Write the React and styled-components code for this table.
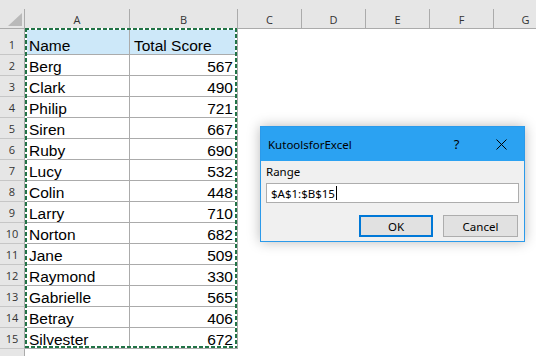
import React from "react";
import styled, { createGlobalStyle } from "styled-components";

const Global = createGlobalStyle`
  html, body { margin: 0; padding: 0; background: #fff; }
  body { width: 536px; height: 356px; overflow: hidden; font-family: "Liberation Sans", Arial, sans-serif; }
  #root { width: 536px; height: 356px; position: relative; overflow: hidden; }
`;

const Page = styled.div`
  width: 536px;
  height: 356px;
  position: relative;
  overflow: hidden;
  background: #fff;
`;

const TopStrip = styled.div`
  height: 9px;
  background: #e6e6e6;
  width: 600px;
`;

const Sheet = styled.div`
  display: grid;
  grid-template-columns: 25px 105px 108px 64px 64px 64px 64px 64px;
  grid-template-rows: 20px 26px repeat(15, 21px);
  width: 558px;
`;

const Corner = styled.div`
  grid-row: 1;
  grid-column: 1;
  background: #e6e6e6;
  border-right: 1px solid #ababab;
  border-bottom: 1px solid #ababab;
  box-sizing: border-box;
  display: flex;
  align-items: flex-end;
  justify-content: flex-end;
  padding: 0 2px 2px 0;
`;

const ColHead = styled.div`
  grid-row: 1;
  grid-column: ${(p) => p.$c};
  background: #e6e6e6;
  border-right: 1px solid #ababab;
  border-bottom: 1px solid #ababab;
  box-sizing: border-box;
  display: flex;
  align-items: center;
  justify-content: center;
  font-family: "Open Sans", "Noto Sans", sans-serif;
  font-size: 11px;
  color: #333;
  padding-top: 1px;
`;

const RowHead = styled.div`
  grid-row: ${(p) => p.$r};
  grid-column: 1;
  background: #e6e6e6;
  border-right: 1px solid #ababab;
  border-bottom: 1px solid #c6c6c6;
  box-sizing: border-box;
  display: flex;
  align-items: flex-end;
  justify-content: center;
  font-family: "Open Sans", "Noto Sans", sans-serif;
  font-size: 11px;
  line-height: 14px;
  color: #333;
  padding-bottom: 2px;
`;

const Cell = styled.div`
  grid-row: ${(p) => p.$r};
  grid-column: ${(p) => p.$c};
  box-sizing: border-box;
  border-right: 1px solid ${(p) => (p.$bordered ? "#ababab" : "transparent")};
  border-bottom: 1px solid ${(p) => (p.$bordered ? "#ababab" : "transparent")};
  background: ${(p) => (p.$head ? "#cde8f9" : "#fff")};
  display: flex;
  align-items: flex-end;
  justify-content: ${(p) => (p.$num ? "flex-end" : "flex-start")};
  padding: 0 ${(p) => (p.$num ? "4px" : "3px")} 0 ${(p) => (p.$num ? "3px" : "4px")};
  font-family: "Liberation Sans", Arial, sans-serif;
  font-size: 15.5px;
  line-height: 17px;
  color: #000;
  white-space: nowrap;
  overflow: hidden;
`;

const Ants = styled.div`
  grid-column: 2 / 4;
  grid-row: 2 / 17;
  margin: -1px 1px 1px 0;
  pointer-events: none;
  background:
    repeating-linear-gradient(90deg, #217346 0 4px, #fff 4px 6px) top / 100% 2px no-repeat,
    repeating-linear-gradient(90deg, #217346 0 4px, #fff 4px 6px) bottom / 100% 2px no-repeat,
    repeating-linear-gradient(180deg, #217346 0 4px, #fff 4px 6px) left / 2px 100% no-repeat,
    repeating-linear-gradient(180deg, #217346 0 4px, #fff 4px 6px) right / 2px 100% no-repeat;
`;

const Dialog = styled.div`
  position: absolute;
  left: 260px;
  top: 126px;
  width: 265px;
  height: 116px;
  box-sizing: border-box;
  border: 1px solid #2b9aea;
  background: #f0f0f0;
  box-shadow: 0 0 12px rgba(0, 0, 0, 0.28);
  display: flex;
  flex-direction: column;
  font-family: "Noto Sans", "Open Sans", sans-serif;
`;

const TitleBar = styled.div`
  height: 34px;
  background: #2ba2f2;
  display: flex;
  align-items: center;
  padding: 0 0 0 7px;
  font-size: 11.5px;
  color: #000;
`;

const Title = styled.div`
  flex: 1;
`;

const TitleBtn = styled.div`
  width: 45px;
  height: 34px;
  display: flex;
  align-items: center;
  justify-content: center;
  font-size: 13px;
  color: #000;
`;

const Body = styled.div`
  flex: 1;
  display: flex;
  flex-direction: column;
  padding: 3px 5px 0 5px;
`;

const Label = styled.div`
  font-size: 11.5px;
  line-height: 16px;
  color: #000;
`;

const Input = styled.div`
  margin-top: 3px;
  height: 20px;
  box-sizing: border-box;
  border: 1px solid #adadad;
  background: #fff;
  display: flex;
  align-items: center;
  padding-left: 4px;
  font-size: 11.5px;
  color: #000;
`;

const Caret = styled.span`
  display: inline-block;
  width: 1px;
  height: 14px;
  background: #000;
  margin-left: 1px;
`;

const Buttons = styled.div`
  margin-top: 12px;
  display: flex;
  justify-content: flex-end;
  gap: 10px;
  padding-right: 1px;
`;

const Button = styled.div`
  width: ${(p) => p.$w || 74}px;
  height: 22px;
  box-sizing: border-box;
  background: #e1e1e1;
  border: ${(p) => (p.$primary ? "2px solid #0078d7" : "1px solid #adadad")};
  display: flex;
  align-items: center;
  justify-content: center;
  font-size: 11.5px;
  color: #000;
`;

const rows = [
  ["Name", "Total Score"],
  ["Berg", "567"],
  ["Clark", "490"],
  ["Philip", "721"],
  ["Siren", "667"],
  ["Ruby", "690"],
  ["Lucy", "532"],
  ["Colin", "448"],
  ["Larry", "710"],
  ["Norton", "682"],
  ["Jane", "509"],
  ["Raymond", "330"],
  ["Gabrielle", "565"],
  ["Betray", "406"],
  ["Silvester", "672"],
];

const cols = ["A", "B", "C", "D", "E", "F", "G"];

export default function App() {
  return (
    <Page>
      <Global />
      <TopStrip />
      <Sheet>
        <Corner>
          <svg width="14" height="13" viewBox="0 0 14 13">
            <polygon points="14,0 14,13 0,13" fill="#b9b9b9" />
          </svg>
        </Corner>
        {cols.map((c, ci) => (
          <ColHead key={c} $c={ci + 2}>{c}</ColHead>
        ))}
        {rows.map((r, i) => (
          <React.Fragment key={i}>
            <RowHead $r={i + 2}>{i + 1}</RowHead>
            <Cell $r={i + 2} $c={2} $bordered $head={i === 0}>{r[0]}</Cell>
            <Cell $r={i + 2} $c={3} $bordered $head={i === 0} $num={i > 0}>{r[1]}</Cell>
          </React.Fragment>
        ))}
        <RowHead $r={17}>16</RowHead>
        <Ants />
      </Sheet>
      <Dialog>
        <TitleBar>
          <Title>KutoolsforExcel</Title>
          <TitleBtn>?</TitleBtn>
          <TitleBtn>
            <svg width="11" height="11" viewBox="0 0 11 11">
              <path d="M0.5 0.5 L10.5 10.5 M10.5 0.5 L0.5 10.5" stroke="#000" strokeWidth="1" />
            </svg>
          </TitleBtn>
        </TitleBar>
        <Body>
          <Label>Range</Label>
          <Input>
            $A$1:$B$15
            <Caret />
          </Input>
          <Buttons>
            <Button $primary>OK</Button>
            <Button $w={75}>Cancel</Button>
          </Buttons>
        </Body>
      </Dialog>
    </Page>
  );
}
